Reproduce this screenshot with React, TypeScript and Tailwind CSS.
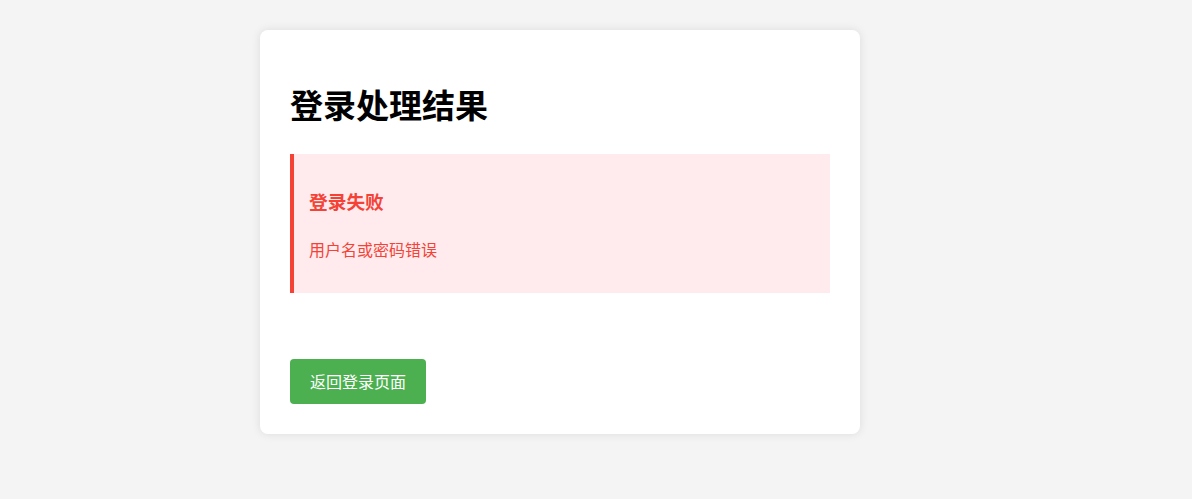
import React from "react";

export default function App() {
  return (
    <div
      className="min-h-screen w-full bg-[#f4f4f4] pt-[30px] pl-[260px]"
      style={{ fontFamily: '"Noto Sans CJK SC", "Noto Sans", sans-serif' }}
    >
      <div className="w-[600px] rounded-[8px] bg-white p-[30px] shadow-[0_0_10px_rgba(0,0,0,0.1)]">
        <h1 className="mt-[20px] mb-[26px] text-[33px] font-bold leading-[48px] text-black">
          登录处理结果
        </h1>
        <div className="border-l-4 border-[#f44336] bg-[#ffebee] px-[15px] pt-[15px] pb-[16px] text-[#f44336]">
          <h3 className="mt-[18px] text-[18.72px] font-bold leading-[28px]">登录失败</h3>
          <p className="mt-[22px] mb-[16px] text-[16px] leading-[24px]">用户名或密码错误</p>
        </div>
        <div className="mt-[66px]">
          <button className="h-[45px] rounded-[4px] bg-[#4caf50] px-[20px] text-[16px] leading-[25px] text-white">
            返回登录页面
          </button>
        </div>
      </div>
    </div>
  );
}
